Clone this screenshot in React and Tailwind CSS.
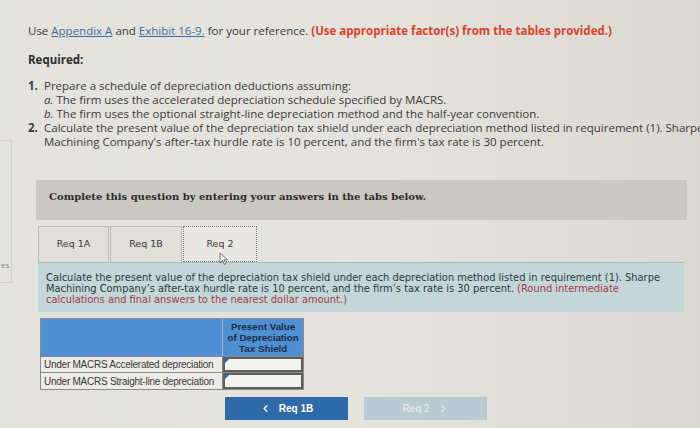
import { ChevronLeft, ChevronRight } from 'lucide-react';

const topFont = { fontFamily: '"Open Sans", Lato, sans-serif' };

const Tab = ({ label, active, w }) => (
    <div
        className={`h-[36px] flex items-center justify-center text-[9.5px] text-[#3a3a3a] ${w} ${
            active
                ? 'bg-[#e9e8e2] border border-dotted border-[#7a7a7a] relative'
                : 'bg-[#e0dfd9] border border-[#bdbcb6] border-b-0'
        }`}
        style={{ fontFamily: '"DejaVu Sans", Verdana, sans-serif' }}
    >
        <span>{label}</span>
        {active && (
            <svg className="absolute left-[35px] top-[25px]" width="10" height="13" viewBox="0 0 10 13">
                <path d="M1 1 L1 11 L3.5 8.5 L5.5 12.5 L7 11.8 L5 7.8 L8.5 7.8 Z" fill="#f4f4f4" stroke="#555" strokeWidth="0.8" />
            </svg>
        )}
    </div>
);

const InputCell = () => (
    <div className="w-[80px] border-2 border-[#5e5e5e] bg-[#f3f3f0] relative">
        <span className="absolute left-0 top-0 w-0 h-0 border-t-[4px] border-t-[#2e63b8] border-r-[4px] border-r-transparent" />
    </div>
);

const App = () => {
    return (
        <div className="w-[700px] h-[428px] overflow-hidden flex bg-linear-to-r from-[#e3e2dc] via-[#e4e3dd] to-[#dad9d2] text-[#333]">
            {/* cut-off side panel */}
            <div className="w-[12px] shrink-0">
                <div className="mt-[140px] h-[143px] border border-l-0 border-[#cfcec8] flex flex-col justify-end pb-[13px]">
                    <span className="text-[8px] text-[#8a8a86] leading-none pl-[1px]" style={topFont}>es</span>
                </div>
            </div>

            <div className="flex-1 min-w-0">
                {/* instructions */}
                <div className="pl-[16px] pt-[24px] text-[11.5px] leading-[14px] text-[#3b3b3b] whitespace-nowrap" style={topFont}>
                    <p>
                        Use <span className="text-[#3f6d9b] underline">Appendix A</span> and{' '}
                        <span className="text-[#3f6d9b] underline">Exhibit 16-9.</span> for your reference.{' '}
                        <span className="font-bold text-[#d8432a]">(Use appropriate factor(s) from the tables provided.)</span>
                    </p>
                    <p className="mt-[15px] font-bold text-[#2e2e2e]">Required:</p>
                    <div className="mt-[12px]">
                        <p><span className="inline-block w-[16px] font-bold">1.</span>Prepare a schedule of depreciation deductions assuming:</p>
                        <p className="pl-[16px]"><i>a.</i> The firm uses the accelerated depreciation schedule specified by MACRS.</p>
                        <p className="pl-[16px]"><i>b.</i> The firm uses the optional straight-line depreciation method and the half-year convention.</p>
                        <p><span className="inline-block w-[16px] font-bold">2.</span>Calculate the present value of the depreciation tax shield under each depreciation method listed in requirement (1). Sharpe</p>
                        <p className="pl-[16px]">Machining Company's after-tax hurdle rate is 10 percent, and the firm's tax rate is 30 percent.</p>
                    </div>
                </div>

                {/* banner */}
                <div
                    className="mt-[31px] ml-[24px] w-[651px] h-[40px] bg-[#c9c8c1] pl-[13px] pt-[10px] text-[10px] leading-[14px] font-bold text-[#2b2b2b]"
                    style={{ fontFamily: '"DejaVu Serif", Georgia, serif' }}
                >
                    Complete this question by entering your answers in the tabs below.
                </div>

                {/* tabs */}
                <div className="mt-[6px] ml-[26px] flex gap-[1px]">
                    <Tab label="Req 1A" w="w-[71px]" />
                    <Tab label="Req 1B" w="w-[72px]" />
                    <Tab label="Req 2" w="w-[74px]" active />
                </div>

                {/* question panel */}
                <div
                    className="ml-[26px] w-[646px] h-[50px] bg-[#c3d6d9] border-t border-[#aab9bb] pl-[8px] pt-[10px] text-[9.9px] leading-[10.8px] text-[#2c3a3e] whitespace-nowrap"
                    style={{ fontFamily: '"DejaVu Sans", Verdana, sans-serif' }}
                >
                    <p>Calculate the present value of the depreciation tax shield under each depreciation method listed in requirement (1). Sharpe</p>
                    <p>
                        Machining Company’s after-tax hurdle rate is 10 percent, and the firm’s tax rate is 30 percent.{' '}
                        <span className="text-[#a63a40]">(Round intermediate</span>
                    </p>
                    <p className="text-[#a63a40]">calculations and final answers to the nearest dollar amount.)</p>
                </div>

                {/* answer table */}
                <div className="mt-[6px] ml-[28px] w-[264px] text-[10px] border border-[#8a8a8a]" style={{ fontFamily: '"Liberation Sans", Arial, sans-serif' }}>
                    <div className="flex h-[37px] bg-[#4f8fd3]">
                        <div className="w-[183px] border-r border-[#9dbbe0]" />
                        <div className="w-[80px] flex items-center justify-center text-center font-bold text-[9.8px] leading-[11px] text-[#1d2c45]">
                            Present Value<br />of Depreciation<br />Tax Shield
                        </div>
                    </div>
                    <div className="flex h-[16px] border-t border-[#8a8a8a]">
                        <div className="w-[183px] bg-[#ecebe7] border-r border-[#8a8a8a] pl-[3px] flex items-center text-[#3a3a3a] tracking-[-0.25px] whitespace-nowrap">
                            Under MACRS Accelerated depreciation
                        </div>
                        <InputCell />
                    </div>
                    <div className="flex h-[17px] border-t border-[#8a8a8a]">
                        <div className="w-[183px] bg-[#ecebe7] border-r border-[#8a8a8a] pl-[3px] flex items-center text-[#3a3a3a] tracking-[-0.25px] whitespace-nowrap">
                            Under MACRS Straight-line depreciation
                        </div>
                        <InputCell />
                    </div>
                </div>

                {/* navigation */}
                <div className="mt-[7px] ml-[213px] flex gap-[16px] text-[10px] font-bold" style={{ fontFamily: '"Liberation Sans", Arial, sans-serif' }}>
                    <button className="w-[123px] h-[23px] bg-[#2e6aa7] text-white flex items-center justify-center gap-[8px]">
                        <ChevronLeft size={11} strokeWidth={3} />
                        <span>Req 1B</span>
                    </button>
                    <button className="w-[123px] h-[23px] bg-[#b8cad2] text-[#e2e9ec] flex items-center justify-center gap-[8px]">
                        <span>Req 2</span>
                        <ChevronRight size={11} strokeWidth={3} />
                    </button>
                </div>
            </div>
        </div>
    );
};

export default App;
